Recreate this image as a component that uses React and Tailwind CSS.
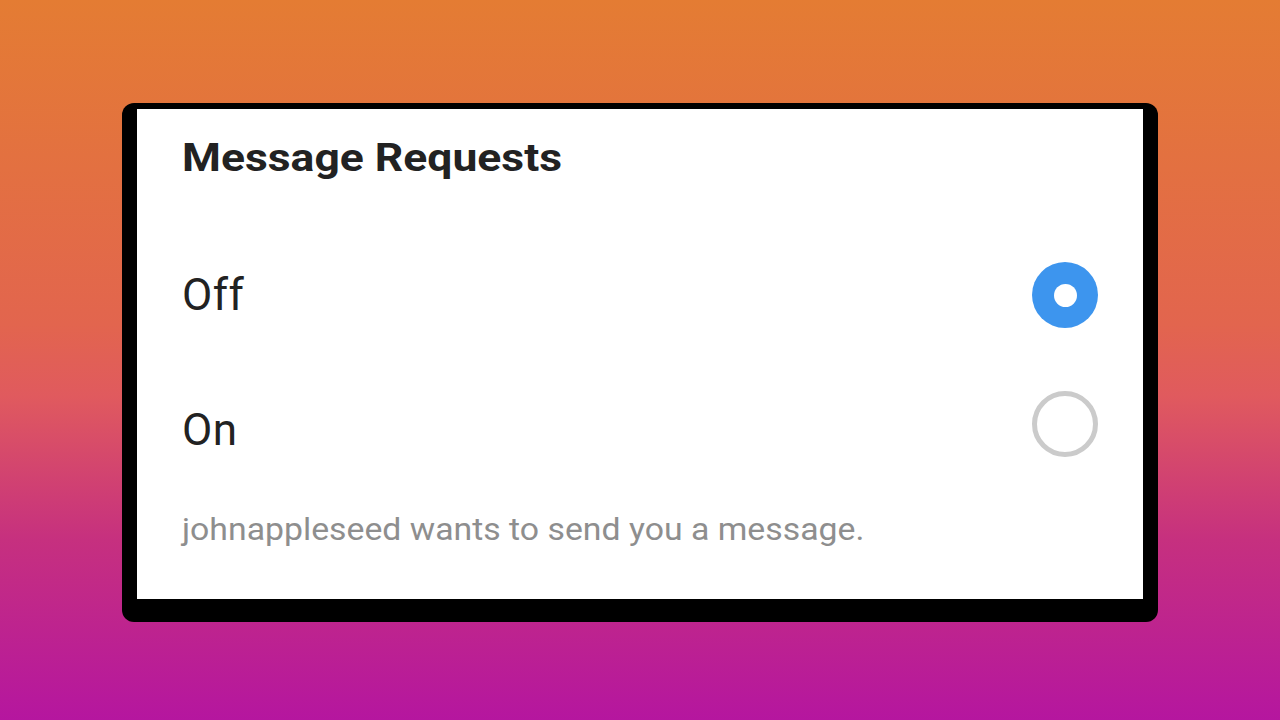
import React, { useState } from "react";

function Radio({ checked }) {
  if (checked) {
    return (
      <div className="w-[66px] h-[66px] rounded-full bg-[#3d95ee] flex items-center justify-center shrink-0">
        <div className="w-[23px] h-[23px] rounded-full bg-white" />
      </div>
    );
  }
  return (
    <div className="w-[66px] h-[66px] rounded-full border-[5px] border-[#cbcbcb] bg-white shrink-0" />
  );
}

export default function App() {
  const [value, setValue] = useState("off");

  return (
    <div className="w-[1280px] h-[720px] flex justify-center pt-[103px] bg-[linear-gradient(180deg,#e47c33_0%,#e2654e_45%,#e05a5e_55%,#c6307f_75%,#b5169f_100%)] font-['Roboto','Liberation_Sans',sans-serif]">
      <div className="w-[1036px] h-[519px] bg-black rounded-[12px] pt-[6px] px-[15px] pb-[23px]">
        <div className="bg-white h-[490px] flex flex-col px-[45px] pt-[30px]">
          <h1 className="text-[39px] leading-[38px] font-bold text-[#222222] origin-left scale-x-[1.14] self-start">
            Message Requests
          </h1>

          <div
            className="mt-[85px] h-[66px] flex items-center justify-between cursor-pointer"
            onClick={() => setValue("off")}
          >
            <span className="text-[44px] leading-[66px] tracking-[0.5px] text-[#222222]">Off</span>
            <Radio checked={value === "off"} />
          </div>

          <div
            className="mt-[63px] h-[66px] flex items-center justify-between cursor-pointer"
            onClick={() => setValue("on")}
          >
            <span className="text-[44px] leading-[66px] tracking-[0.5px] text-[#222222] mt-[12px]">On</span>
            <Radio checked={value === "on"} />
          </div>

          <p className="mt-[58px] text-[31px] leading-[30px] text-[#8e8e8e] origin-left scale-x-[1.09] self-start">
            johnappleseed wants to send you a message.
          </p>
        </div>
      </div>
    </div>
  );
}
